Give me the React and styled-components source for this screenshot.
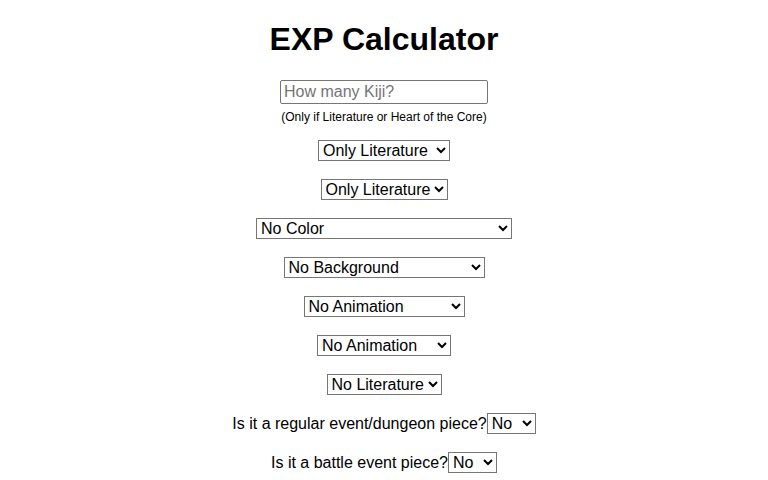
import React from 'react'
import styled, { createGlobalStyle } from 'styled-components'

const GlobalStyle = createGlobalStyle`
  body {
    margin: 0;
    background: #fff;
    font-family: "Liberation Sans", Arial, sans-serif;
    color: #000;
  }
`

const Page = styled.main`
  display: flex;
  flex-direction: column;
  align-items: center;
  text-align: center;
`

const Title = styled.h1`
  font-size: 32px;
  font-weight: bold;
  margin: 21px 0 22px;
`

const KijiInput = styled.input`
  width: 208px;
  height: 24px;
  box-sizing: border-box;
  font-family: inherit;
  font-size: 16px;
  padding: 1px 3px;
  border: 1px solid #767676;
  border-radius: 2px;

  &::placeholder {
    color: #757575;
  }
`

const Note = styled.small`
  display: block;
  font-size: 12px;
  margin: 6px 0 16px;
`

const Row = styled.div`
  display: flex;
  align-items: center;
  justify-content: center;
  height: 21px;
  margin-bottom: 18px;
  font-size: 16px;
`

const Select = styled.select`
  width: ${(p) => p.$w}px;
  height: 21px;
  box-sizing: border-box;
  font-family: "Liberation Sans", Arial, sans-serif;
  font-size: 16px;
  color: #000;
  background: #fff;
  border: 1px solid #767676;
  border-radius: 0;
`

const fields = [
  { w: 132, options: ['Only Literature', 'Literature + Kiji', 'Heart of the Core'] },
  { w: 127, options: ['Only Literature', 'Literature + Kiji'] },
  { w: 256, options: ['No Color', 'Color'] },
  { w: 201, options: ['No Background', 'Background'] },
  { w: 161, options: ['No Animation', 'Animation'] },
  { w: 134, options: ['No Animation', 'Animation'] },
  { w: 115, options: ['No Literature', 'Literature'] },
]

export default function App() {
  return (
    <>
      <GlobalStyle />
      <Page>
        <Title>EXP Calculator</Title>
        <KijiInput type="number" placeholder="How many Kiji?" />
        <Note>(Only if Literature or Heart of the Core)</Note>
        {fields.map((f, i) => (
          <Row key={i}>
            <Select $w={f.w}>
              {f.options.map((o) => (
                <option key={o}>{o}</option>
              ))}
            </Select>
          </Row>
        ))}
        <Row>
          Is it a regular event/dungeon piece?
          <Select $w={49}>
            <option>No</option>
            <option>Yes</option>
          </Select>
        </Row>
        <Row>
          Is it a battle event piece?
          <Select $w={49}>
            <option>No</option>
            <option>Yes</option>
          </Select>
        </Row>
      </Page>
    </>
  )
}
